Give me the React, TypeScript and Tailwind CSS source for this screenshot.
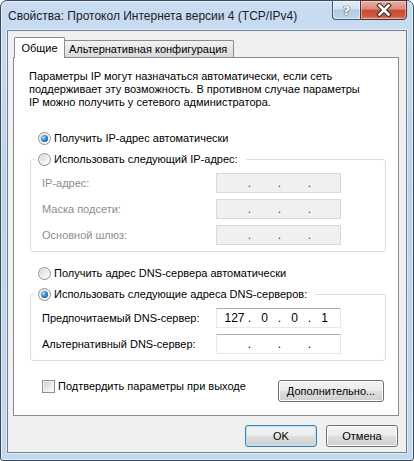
import React from 'react';
import clsx from 'clsx';

const Radio = ({ checked }: { checked?: boolean }) => (
  <span className="flex h-[13px] w-[13px] shrink-0 items-center justify-center rounded-full border border-[#8e8f8f] bg-[linear-gradient(135deg,#cfcfcf,#f6f6f6_70%,#ffffff)] shadow-[inset_0_0_0_1px_#f4f4f4]">
    {checked && (
      <span className="h-[7px] w-[7px] rounded-full bg-[radial-gradient(circle_at_35%_35%,#a8e4ff,#2a7fc4_50%,#0b3f72)]" />
    )}
  </span>
);

const RadioRow = ({ checked, label }: { checked?: boolean; label: string }) => (
  <div className="flex h-[15px] items-center gap-[3px]">
    <Radio checked={checked} />
    <span>{label}</span>
  </div>
);

const IpField = ({ parts, disabled }: { parts?: string[]; disabled?: boolean }) => {
  const p = parts ?? ['', '', '', ''];
  return (
    <div
      className={clsx(
        'flex h-[20px] w-[125px] shrink-0 items-center border pl-[4px] text-[12px]',
        disabled
          ? 'border-[#d9d9d9] bg-[#f0f0f0] text-[#444]'
          : 'border-[#e3e9ef] border-t-[#abadb3] bg-white text-black'
      )}
    >
      {p.map((v, i) => (
        <React.Fragment key={i}>
          {i > 0 && <span className="flex w-[3px] justify-center">.</span>}
          <span className="w-[27px] text-center">{v}</span>
        </React.Fragment>
      ))}
    </div>
  );
};

const FieldRow = ({ label, parts, disabled }: { label: string; parts?: string[]; disabled?: boolean }) => (
  <div className="ml-[8px] flex h-[20px] items-center">
    <span className={clsx('w-[174px]', disabled ? 'text-[#8d8d8d]' : 'text-black')}>{label}</span>
    <IpField parts={parts} disabled={disabled} />
  </div>
);

const Group = ({ legend, checked, children }: { legend: string; checked?: boolean; children: React.ReactNode }) => (
  <fieldset className="ml-[16px] w-[356px] rounded-[3px] border border-[#d5dfe5] pl-[3px] pt-[6px] pb-[6px]">
    <legend className="flex h-[15px] items-center gap-[3px] pl-[4px] pr-[8px]">
      <Radio checked={checked} />
      <span>{legend}</span>
    </legend>
    <div className="flex flex-col gap-[6px]">{children}</div>
  </fieldset>
);

const Button = ({ children, def, className }: { children: React.ReactNode; def?: boolean; className?: string }) => (
  <button
    className={clsx(
      'flex h-[22px] items-center justify-center rounded-[3px] border bg-[linear-gradient(#f2f2f2_0%,#ebebeb_48%,#dddddd_52%,#cfcfcf_100%)] text-black',
      def ? 'border-[#3c7fb1] shadow-[inset_0_0_0_1px_#b9e6fb]' : 'border-[#707070] shadow-[inset_0_0_0_1px_#fcfcfc]',
      className
    )}
  >
    {children}
  </button>
);

export default function App() {
  return (
    <div className="h-[461px] w-[414px] font-['Segoe_UI','Liberation_Sans',sans-serif] text-[11px] leading-[13px] text-black">
      <div className="flex h-full w-full flex-col rounded-t-[7px] rounded-b-[3px] border border-[#38495c] bg-[linear-gradient(180deg,#c9dcf1_0%,#bdd3ec_40%,#c3d8ef_100%)] px-[6px] pb-[7px] shadow-[inset_0_0_0_1px_rgba(255,255,255,0.55)]">
        {/* Title bar */}
        <div className="flex h-[29px] shrink-0 items-start justify-between">
          <span className="mt-[8px] pl-[1px] text-[12px] leading-[14px] text-[#1b1b2b]">
            Свойства: Протокол Интернета версии 4 (TCP/IPv4)
          </span>
          <div className="-mt-px flex">
            <div className="flex h-[20px] w-[28px] items-center justify-center rounded-bl-[4px] border border-r-0 border-[#44576d] bg-[linear-gradient(#e4edf7_0%,#d3e1f0_45%,#b2c7de_50%,#c2d5ea_100%)] shadow-[inset_0_0_0_1px_rgba(255,255,255,0.5)]">
              <span className="font-['DejaVu_Sans',sans-serif] text-[13px] font-bold leading-none text-white [text-shadow:0_0_1px_#2a3440,0_0_1px_#2a3440]">
                ?
              </span>
            </div>
            <div className="flex h-[20px] w-[47px] items-center justify-center rounded-br-[4px] border border-[#44343a] bg-[linear-gradient(#eab1a5_0%,#dc8773_45%,#c84a31_52%,#cd5a3f_85%,#e08a6c_100%)] shadow-[inset_0_0_0_1px_rgba(255,220,210,0.5)]">
              <svg width="16" height="14" viewBox="0 0 16 14">
                <path d="M3.5 2.5 L12.5 11.5 M12.5 2.5 L3.5 11.5" stroke="#3a2a2a" strokeWidth="4.6" strokeLinecap="square" />
                <path d="M3.5 2.5 L12.5 11.5 M12.5 2.5 L3.5 11.5" stroke="#ffffff" strokeWidth="2.6" strokeLinecap="square" />
              </svg>
            </div>
          </div>
        </div>

        {/* Client area */}
        <div className="flex flex-1 flex-col border border-[#6e7e92] bg-[#f0f0f0] shadow-[0_0_0_1px_rgba(255,255,255,0.5)]">
          {/* Tabs */}
          <div className="mt-[6px] flex h-[20px] items-end pl-[6px]">
            <div className="relative z-10 -mb-px flex h-[21px] w-[51px] justify-center rounded-t-[2px] border border-b-0 border-[#898c95] bg-white pt-[4px]">
              Общие
            </div>
            <div className="flex h-[17px] w-[169px] items-start whitespace-nowrap rounded-tr-[2px] border border-b-0 border-l-0 border-[#898c95] bg-[linear-gradient(#f3f3f3,#e5e5e5_50%,#d9d9d9)] pl-[4px] pt-[2px]">
              Альтернативная конфигурация
            </div>
          </div>

          {/* Panel */}
          <div className="ml-[5px] flex h-[359px] w-[386px] flex-col border border-[#898c95] bg-white">
            <p className="pl-[15px] pt-[12px]">
              Параметры IP могут назначаться автоматически, если сеть
              <br />
              поддерживает эту возможность. В противном случае параметры
              <br />
              IP можно получить у сетевого администратора.
            </p>

            <div className="ml-[24px] mt-[22px]">
              <RadioRow checked label="Получить IP-адрес автоматически" />
            </div>

            <div className="mt-[6px]">
              <Group legend="Использовать следующий IP-адрес:">
                <FieldRow label="IP-адрес:" disabled />
                <FieldRow label="Маска подсети:" disabled />
                <FieldRow label="Основной шлюз:" disabled />
              </Group>
            </div>

            <div className="ml-[24px] mt-[14px]">
              <RadioRow label="Получить адрес DNS-сервера автоматически" />
            </div>

            <div className="mt-[6px]">
              <Group legend="Использовать следующие адреса DNS-серверов:" checked>
                <FieldRow label="Предпочитаемый DNS-сервер:" parts={['127', '0', '0', '1']} />
                <FieldRow label="Альтернативный DNS-сервер:" />
              </Group>
            </div>

            <div className="mt-[19px] flex items-start justify-between pl-[28px] pr-[14px]">
              <div className="flex items-center gap-[3px]">
                <span className="h-[13px] w-[13px] border border-[#8e8f8f] bg-[linear-gradient(135deg,#cbcbcb,#f4f4f4_75%,#ffffff)] shadow-[inset_0_0_0_1px_#f4f4f4]" />
                <span>Подтвердить параметры при выходе</span>
              </div>
              <Button className="w-[106px]">Дополнительно...</Button>
            </div>
          </div>

          {/* Dialog buttons */}
          <div className="mt-[9px] flex justify-end gap-[9px] pr-[8px]">
            <Button def className="w-[72px]">
              OK
            </Button>
            <Button className="w-[72px]">Отмена</Button>
          </div>
        </div>
      </div>
    </div>
  );
}
